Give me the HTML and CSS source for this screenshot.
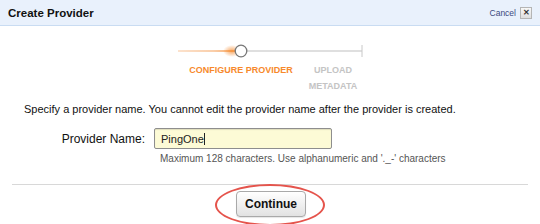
FILE: index.html
```html
<!DOCTYPE html>
<html>
<head>
<meta charset="utf-8">
<link rel="stylesheet" href="styles.css">
</head>
<body>
<div class="dialog">
  <div class="header">
    <div class="title">Create Provider</div>
    <div class="cancel"><span class="cancel-text">Cancel</span><span class="close">✕</span></div>
  </div>
  <div class="steps">
    <svg class="track" width="190" height="14" viewBox="0 0 190 14">
      <defs>
        <linearGradient id="og" gradientUnits="userSpaceOnUse" x1="3" y1="7" x2="62" y2="7">
          <stop offset="0" stop-color="#fbd9bd"/>
          <stop offset="0.6" stop-color="#f8be8e"/>
          <stop offset="1" stop-color="#f58a2e"/>
        </linearGradient>
        <radialGradient id="glow" cx="0.5" cy="0.5" r="0.5">
          <stop offset="0" stop-color="#f58a2e" stop-opacity="0.75"/>
          <stop offset="1" stop-color="#f58a2e" stop-opacity="0"/>
        </radialGradient>
      </defs>
      <line x1="3" y1="7" x2="62" y2="7" stroke="url(#og)" stroke-width="1.5"/>
      <ellipse cx="57" cy="7" rx="9" ry="6" fill="url(#glow)"/>
      <line x1="72" y1="7" x2="187" y2="7" stroke="#d4d4d4" stroke-width="1.5"/>
      <line x1="187" y1="1" x2="187" y2="13" stroke="#c8c8c8" stroke-width="1"/>
      <circle cx="66" cy="7" r="5.8" fill="#fff" stroke="#777" stroke-width="1.3"/>
    </svg>
    <div class="labels">
      <div class="step active">CONFIGURE PROVIDER</div>
      <div class="step next">UPLOAD METADATA</div>
    </div>
  </div>
  <p class="intro">Specify a provider name. You cannot edit the provider name after the provider is created.</p>
  <div class="form-row">
    <label class="label">Provider Name:</label>
    <div class="input"><span>PingOne</span><span class="caret"></span></div>
  </div>
  <div class="hint">Maximum 128 characters. Use alphanumeric and '._-' characters</div>
  <div class="footer">
    <button class="continue">Continue</button>
    <div class="annotation"></div>
  </div>
</div>
</body>
</html>
```
FILE: styles.css
```css
html, body {
  margin: 0;
  padding: 0;
  background: #fff;
}
body {
  width: 540px;
  height: 224px;
  overflow: hidden;
  font-family: "Liberation Sans", Arial, sans-serif;
  color: #111;
}
.dialog {
  width: 540px;
}
.header {
  height: 25px;
  background: #e9f1fc;
  border-bottom: 1px solid #c9dcf2;
  display: flex;
  align-items: center;
  justify-content: space-between;
  padding: 0 8px 0 8px;
}
.title {
  font-weight: bold;
  font-size: 11.5px;
  color: #111;
}
.cancel {
  display: flex;
  align-items: center;
  gap: 4px;
}
.cancel-text {
  font-size: 8.5px;
  color: #3c4a7e;
}
.close {
  width: 10px;
  height: 10px;
  border: 1px solid #b5b5b5;
  background: linear-gradient(#f8f8f8, #dedede);
  font-size: 8px;
  line-height: 10px;
  text-align: center;
  color: #333;
  font-weight: bold;
}
.steps {
  margin: 18px 0 0 175px;
  width: 190px;
}
.track {
  display: block;
}
.labels {
  display: flex;
  margin-top: 4px;
}
.step {
  font-size: 9px;
  font-weight: bold;
  line-height: 16px;
  text-align: center;
}
.step.active {
  width: 132px;
  color: #f7892b;
}
.step.next {
  width: 52px;
  color: #c4c4c4;
}
.intro {
  margin: 8px 0 0 24px;
  font-size: 11px;
  line-height: 14px;
  color: #111;
}
.form-row {
  display: flex;
  align-items: center;
  margin-top: 12px;
}
.label {
  width: 145px;
  text-align: right;
  font-size: 12px;
  color: #111;
  margin-right: 9px;
}
.input {
  width: 170px;
  height: 19px;
  border: 1px solid #8e8e8e;
  border-radius: 2px;
  background: #fdfbd6;
  box-shadow: inset 0 1px 1px rgba(0,0,0,0.12);
  display: flex;
  align-items: center;
  padding-left: 6px;
  font-size: 11px;
  color: #222;
}
.caret {
  display: inline-block;
  width: 1px;
  height: 12px;
  background: #222;
}
.hint {
  margin: 4px 0 0 160px;
  font-size: 10px;
  line-height: 12px;
  color: #555;
}
.footer {
  position: relative;
  margin: 19px 12px 0 12px;
  border-top: 1px solid #d8d8d8;
  display: flex;
  justify-content: center;
  padding-top: 6px;
}
.continue {
  width: 70px;
  height: 26px;
  margin-left: 2px;
  font-family: "Liberation Sans", Arial, sans-serif;
  font-size: 12px;
  font-weight: bold;
  color: #111;
  border: 1px solid #a9a9a9;
  border-radius: 4px;
  background: linear-gradient(#ffffff, #e2e2e2);
  box-shadow: 0 1px 1px rgba(0,0,0,0.1);
  padding: 0;
}
.annotation {
  position: absolute;
  left: 203px;
  top: -1px;
  width: 106px;
  height: 38px;
  border: 2px solid #e5544c;
  border-radius: 50%;
}
```
